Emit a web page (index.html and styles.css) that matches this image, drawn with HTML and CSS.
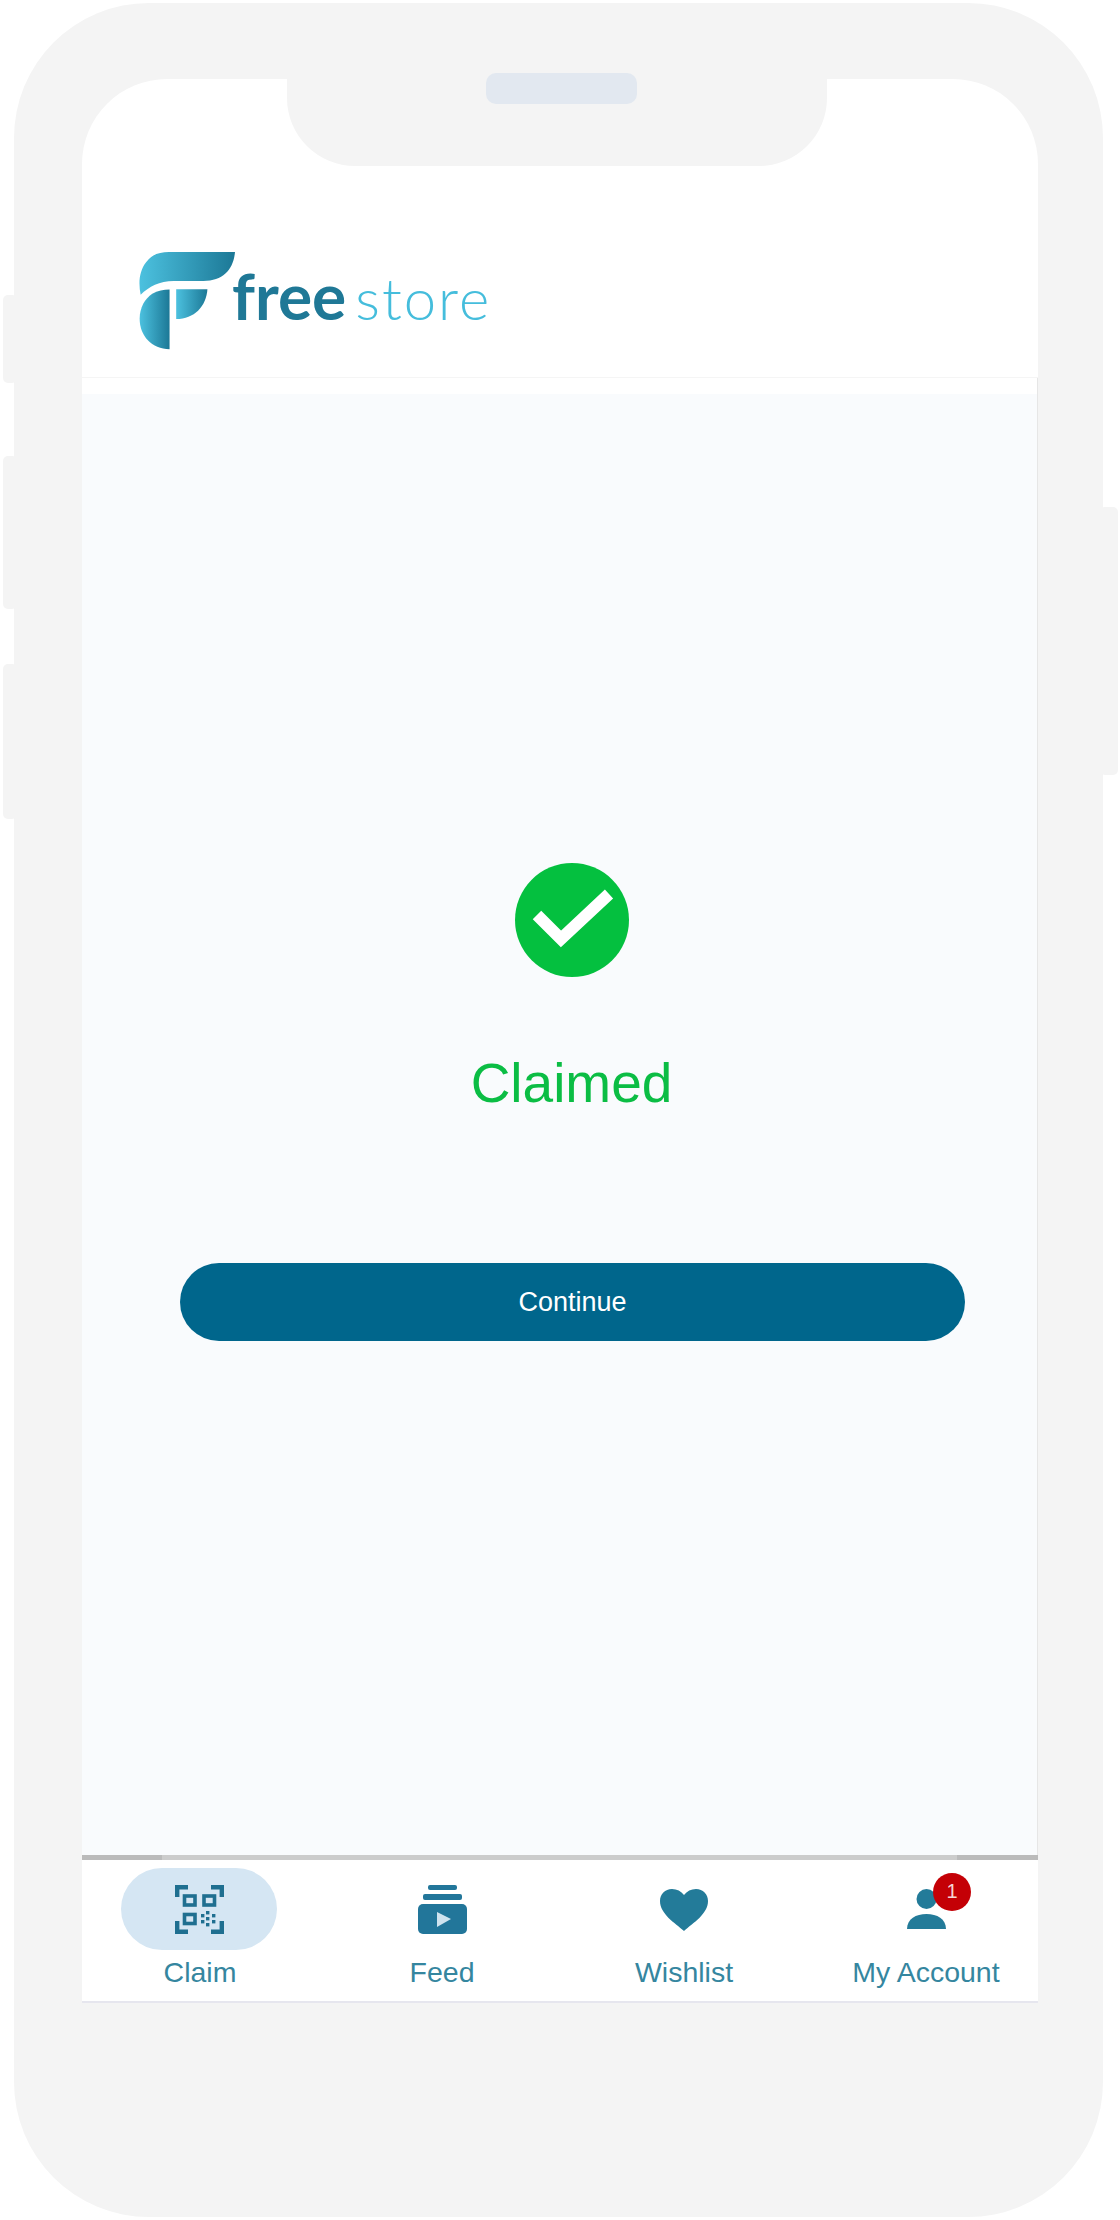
FILE: index.html
```html
<!DOCTYPE html>
<html lang="en">
<head>
    <meta charset="UTF-8">
    <meta name="viewport" content="width=device-width, initial-scale=1.0">
    <title>Free Store - Claimed</title>
    <link rel="stylesheet" href="styles.css">
</head>
<body>
    <div class="phone">
        <span class="side-btn side-btn-1"></span>
        <span class="side-btn side-btn-2"></span>
        <span class="side-btn side-btn-3"></span>
        <span class="side-btn side-btn-right"></span>
        <div class="notch"><span class="speaker"></span></div>

        <div class="screen">
            <header class="app-header">
                <svg class="logo-mark" viewBox="57 65 290 295" aria-hidden="true">
                    <defs>
                        <linearGradient id="leaf" x1="0" y1="0" x2="1" y2="0">
                            <stop offset="0" stop-color="#4cc1df"/>
                            <stop offset="1" stop-color="#1c7896"/>
                        </linearGradient>
                    </defs>
                    <path fill="url(#leaf)" d="M61 194C54 160 56 122 78 95C96 72 118 65 146 65H345C340 118 310 152 250 152H160C118 152 86 168 61 194Z"/>
                    <path fill="url(#leaf)" d="M148 178V358C94 356 58 318 58 266C58 232 74 206 96 191C112 181 130 178 148 178Z"/>
                    <path fill="url(#leaf)" d="M168 177H262C258 230 222 266 168 267Z"/>
                </svg>
                <div class="logo-text"><span class="logo-free">free</span><span class="logo-store">store</span></div>
            </header>

            <main class="content">
                <svg class="check" viewBox="0 0 114 114" aria-hidden="true">
                    <circle cx="57" cy="57" r="57" fill="#04c03f"/>
                    <path d="M22 52L46 76L94 31" fill="none" stroke="#fff" stroke-width="12"/>
                </svg>
                <h1 class="status">Claimed</h1>
                <button class="continue-btn">Continue</button>
            </main>

            <div class="tab-rule"></div>
            <nav class="tabbar">
                <a class="tab">
                    <span class="tab-icon active">
                        <svg width="49" height="49" viewBox="0 0 49 49" aria-hidden="true">
                            <g fill="none" stroke="#1f6f90" stroke-width="4.4">
                                <path d="M2.2 12V2.2H13"/>
                                <path d="M36 2.2H46.8V12"/>
                                <path d="M2.2 36V46.8H13"/>
                                <path d="M46.8 36V46.8H36"/>
                            </g>
                            <g fill="none" stroke="#1f6f90" stroke-width="3.6">
                                <rect x="9.5" y="11" width="10.5" height="9"/>
                                <rect x="29" y="11" width="10.5" height="9"/>
                                <rect x="9.5" y="29.5" width="10.5" height="9"/>
                            </g>
                            <g fill="#1f6f90">
                                <rect x="26" y="29" width="3.4" height="3.4"/>
                                <rect x="31" y="26" width="3.4" height="3.4"/>
                                <rect x="37" y="29" width="3.4" height="3.4"/>
                                <rect x="31" y="32" width="3.4" height="3.4"/>
                                <rect x="26" y="35" width="3.4" height="3.4"/>
                                <rect x="37" y="35" width="3.4" height="3.4"/>
                                <rect x="31" y="38" width="3.4" height="3.4"/>
                            </g>
                        </svg>
                    </span>
                    <span class="tab-label">Claim</span>
                </a>
                <a class="tab">
                    <span class="tab-icon">
                        <svg width="49" height="49" viewBox="0 0 49 49" aria-hidden="true">
                            <rect x="10" y="0" width="29" height="5" rx="2" fill="#22769a"/>
                            <rect x="5" y="9" width="39" height="6" rx="2" fill="#22769a"/>
                            <rect x="0" y="19" width="49" height="30" rx="5" fill="#22769a"/>
                            <path d="M19 27L33 34L19 42Z" fill="#cfe3ef"/>
                        </svg>
                    </span>
                    <span class="tab-label">Feed</span>
                </a>
                <a class="tab">
                    <span class="tab-icon">
                        <svg width="50" height="49" viewBox="0 0 50 49" aria-hidden="true">
                            <path d="M25 46C16 38 1 29 1 16C1 9 6 4 13 4C18 4 22 6 25 10C28 6 32 4 37 4C44 4 49 9 49 16C49 29 34 38 25 46Z" fill="#237b99"/>
                        </svg>
                    </span>
                    <span class="tab-label">Wishlist</span>
                </a>
                <a class="tab">
                    <span class="tab-icon">
                        <svg width="49" height="49" viewBox="0 0 49 49" aria-hidden="true">
                            <circle cx="24.5" cy="14" r="10" fill="#237b99"/>
                            <path d="M5 44C5 34 14 29 24.5 29C35 29 44 34 44 44Z" fill="#237b99"/>
                        </svg>
                        <span class="badge">1</span>
                    </span>
                    <span class="tab-label">My Account</span>
                </a>
            </nav>
        </div>
    </div>
</body>
</html>
```

FILE: styles.css
```css
body {
    margin: 0;
    width: 1120px;
    height: 2220px;
    background: #fff;
    font-family: "Liberation Sans", Arial, sans-serif;
    overflow: hidden;
}
.phone {
    position: relative;
    box-sizing: border-box;
    width: 1089px;
    height: 2214px;
    margin: 3px 0 0 14px;
    padding: 76px 65px 0 68px;
    background: #f4f4f4;
    border-radius: 135px;
}
.side-btn {
    position: absolute;
    left: -11px;
    width: 14px;
    background: #f4f4f4;
    border-radius: 5px;
}
.side-btn-1 { top: 292px; height: 88px; }
.side-btn-2 { top: 453px; height: 153px; }
.side-btn-3 { top: 661px; height: 155px; }
.side-btn-right {
    left: auto;
    right: -15px;
    top: 504px;
    width: 18px;
    height: 268px;
}
.notch {
    position: absolute;
    top: 70px;
    left: 273px;
    width: 540px;
    height: 93px;
    background: #f4f4f4;
    border-radius: 0 0 68px 68px;
}
.speaker {
    position: absolute;
    top: 0;
    left: 199px;
    width: 151px;
    height: 31px;
    background: #e2e8f0;
    border-radius: 10px;
}
.screen {
    display: flex;
    flex-direction: column;
    height: 1924px;
    background: #fff;
    border-radius: 85px 85px 0 0;
    overflow: hidden;
}
.app-header {
    box-sizing: border-box;
    display: flex;
    align-items: flex-start;
    height: 299px;
    padding: 173px 0 0 57px;
    border-bottom: 1px solid #f5f5f5;
}
.logo-mark {
    width: 97px;
    height: 98px;
    flex-shrink: 0;
}
.logo-text {
    display: flex;
    align-items: baseline;
    margin: 9px 0 0 -4px;
    font-family: Lato, sans-serif;
    line-height: 70px;
}
.logo-free {
    font-size: 64px;
    font-weight: 700;
    color: #1f7896;
}
.logo-store {
    margin-left: 9px;
    font-size: 58px;
    font-weight: 300;
    color: #45bddc;
    letter-spacing: 2px;
}
.content {
    flex: 1;
    display: flex;
    flex-direction: column;
    align-items: center;
    padding: 485px 72px 0 98px;
    background: linear-gradient(#fff 16px, #f9fbfd 16px);
    border-left: 1px solid #e6e6e6;
    border-right: 1px solid #e6e6e6;
    margin-left: -1px;
}
.check {
    width: 114px;
    height: 114px;
    margin-left: -2px;
}
.status {
    margin: 74px 0 0 -2px;
    font-size: 55px;
    line-height: 64px;
    font-weight: 400;
    color: #0bbd44;
}
.continue-btn {
    width: 100%;
    height: 78px;
    margin-top: 148px;
    background: #00668c;
    color: #fff;
    border: none;
    border-radius: 39px;
    font-family: inherit;
    font-size: 27px;
}
.tab-rule {
    height: 5px;
    flex-shrink: 0;
    background: linear-gradient(to right, #bbb 80px, #ccc 80px, #ccc 875px, #bbb 875px);
}
.tabbar {
    display: grid;
    grid-template-columns: repeat(4, 242px);
    flex-shrink: 0;
    box-sizing: border-box;
    width: 959px;
    height: 143px;
    margin-left: -3px;
    border-bottom: 2px solid #e6e6ee;
    background: #fff;
}
.tab {
    display: flex;
    flex-direction: column;
    align-items: center;
    padding-top: 8px;
}
.tab-icon {
    position: relative;
    display: flex;
    align-items: center;
    justify-content: center;
    width: 156px;
    height: 82px;
    border-radius: 41px;
}
.tab-icon.active {
    margin-left: -2px;
    background: #d5e6f3;
}
.badge {
    position: absolute;
    top: 5px;
    left: 85px;
    width: 38px;
    height: 38px;
    line-height: 36px;
    text-align: center;
    border-radius: 50%;
    background: #c40006;
    color: #f6d5d6;
    font-size: 20px;
}
.tab-label {
    margin-top: 4px;
    line-height: 37px;
    font-size: 28.5px;
    color: #35869f;
    white-space: nowrap;
}
```
